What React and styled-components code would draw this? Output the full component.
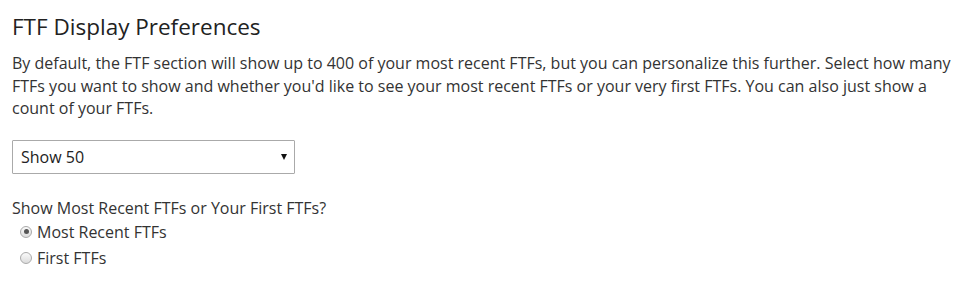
import React from "react";
import styled, { createGlobalStyle } from "styled-components";

const Global = createGlobalStyle`
  html, body { margin: 0; padding: 0; background: #fff; }
  body { font-family: "Open Sans", "Liberation Sans", sans-serif; color: #333; }
`;

const Page = styled.div`
  padding: 11px 12px;
  width: 954px;
  box-sizing: content-box;
`;

const Title = styled.h2`
  margin: 0 0 9px 0;
  font-size: 22.5px;
  font-weight: 400;
  color: #222;
  line-height: 32px;
`;

const Para = styled.p`
  margin: 0 0 20px 0;
  font-size: 16px;
  line-height: 22.5px;
  color: #333;
`;

const SelectBox = styled.div`
  width: 283px;
  height: 34px;
  box-sizing: border-box;
  border: 1px solid #aaa;
  border-radius: 1px;
  display: flex;
  align-items: center;
  justify-content: space-between;
  padding: 0 7px 0 8px;
  font-size: 16px;
  color: #222;
  margin-bottom: 23px;
`;

const Arrow = styled.span`
  width: 0;
  height: 0;
  border-left: 3px solid transparent;
  border-right: 3px solid transparent;
  border-top: 6px solid #111;
`;

const Question = styled.div`
  font-size: 16px;
  line-height: 22px;
`;

const RadioRow = styled.label`
  display: flex;
  align-items: center;
  gap: 5px;
  font-size: 16px;
  line-height: 26px;
  padding-left: 8px;
`;

const Radio = styled.span`
  width: 12px;
  height: 12px;
  box-sizing: border-box;
  border-radius: 50%;
  border: 1px solid #aaa;
  background: linear-gradient(#fafafa, #dcdcdc);
  display: flex;
  align-items: center;
  justify-content: center;
  &::after {
    content: "";
    width: 5px;
    height: 5px;
    border-radius: 50%;
    background: ${(p) => (p.checked ? "#555" : "transparent")};
  }
`;

export default function App() {
  return (
    <Page>
      <Global />
      <Title>FTF Display Preferences</Title>
      <Para>
        By default, the FTF section will show up to 400 of your most recent FTFs, but you can personalize this further. Select how many FTFs you want to show and whether you'd like to see your most recent FTFs or your very first FTFs. You can also just show a count of your FTFs.
      </Para>
      <SelectBox>
        <span>Show 50</span>
        <Arrow />
      </SelectBox>
      <Question>Show Most Recent FTFs or Your First FTFs?</Question>
      <RadioRow>
        <Radio checked />
        Most Recent FTFs
      </RadioRow>
      <RadioRow>
        <Radio />
        First FTFs
      </RadioRow>
    </Page>
  );
}
